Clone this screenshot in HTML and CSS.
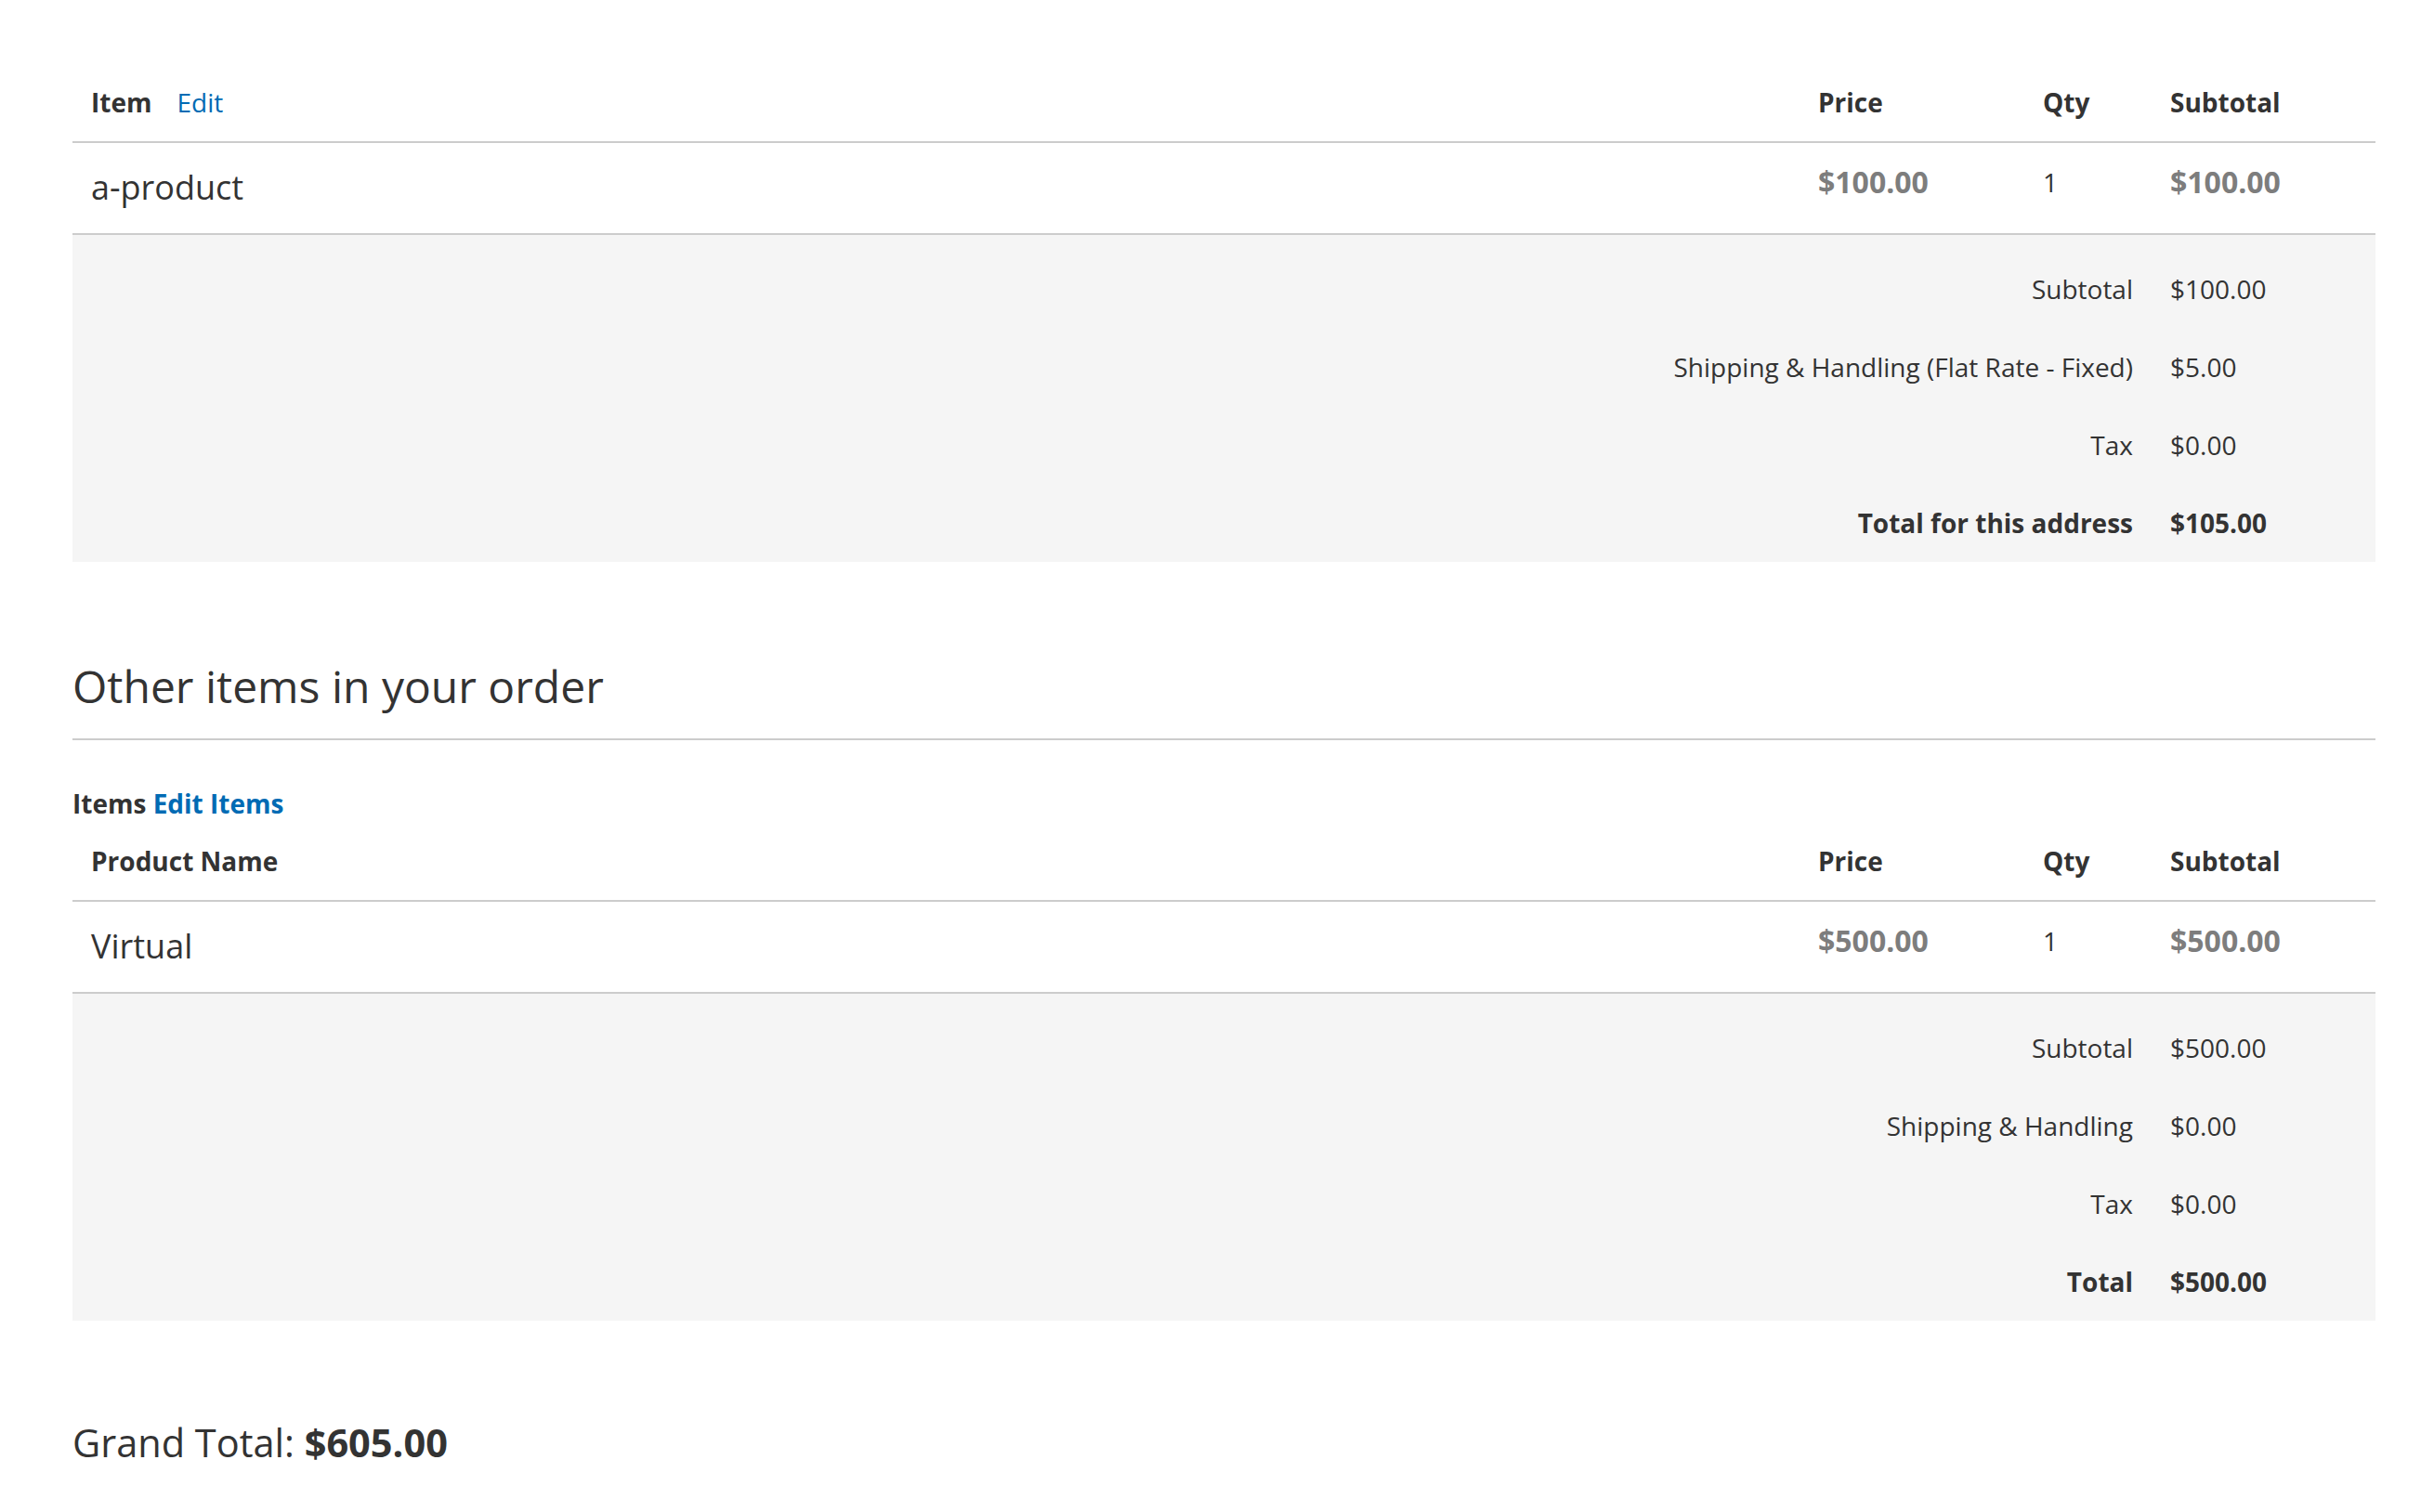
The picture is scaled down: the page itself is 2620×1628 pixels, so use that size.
FILE: index.html
```html
<!DOCTYPE html>
<html lang="en">
<head>
<meta charset="utf-8">
<title>Review Order</title>
<link rel="stylesheet" href="styles.css">
</head>
<body>
<main class="page">
  <table class="items">
    <colgroup>
      <col class="c-name"><col class="c-price"><col class="c-qty"><col class="c-sub">
    </colgroup>
    <thead>
      <tr>
        <th class="col-name"><span>Item</span><a href="#" class="edit">Edit</a></th>
        <th>Price</th>
        <th>Qty</th>
        <th>Subtotal</th>
      </tr>
    </thead>
    <tbody>
      <tr>
        <td class="col-name"><span class="product-name">a-product</span></td>
        <td><span class="price">$100.00</span></td>
        <td class="qty">1</td>
        <td><span class="price">$100.00</span></td>
      </tr>
    </tbody>
    <tfoot>
      <tr>
        <th colspan="3" class="mark">Subtotal</th>
        <td class="amount">$100.00</td>
      </tr>
      <tr>
        <th colspan="3" class="mark">Shipping &amp; Handling (Flat Rate - Fixed)</th>
        <td class="amount">$5.00</td>
      </tr>
      <tr>
        <th colspan="3" class="mark">Tax</th>
        <td class="amount">$0.00</td>
      </tr>
      <tr class="grand">
        <th colspan="3" class="mark"><strong>Total for this address</strong></th>
        <td class="amount"><strong>$105.00</strong></td>
      </tr>
    </tfoot>
  </table>

  <h2 class="block-title">Other items in your order</h2>

  <div class="caption"><strong>Items</strong> <a href="#" class="edit-items">Edit Items</a></div>
  <table class="items">
    <colgroup>
      <col class="c-name"><col class="c-price"><col class="c-qty"><col class="c-sub">
    </colgroup>
    <thead>
      <tr>
        <th class="col-name">Product Name</th>
        <th>Price</th>
        <th>Qty</th>
        <th>Subtotal</th>
      </tr>
    </thead>
    <tbody>
      <tr>
        <td class="col-name"><span class="product-name">Virtual</span></td>
        <td><span class="price">$500.00</span></td>
        <td class="qty">1</td>
        <td><span class="price">$500.00</span></td>
      </tr>
    </tbody>
    <tfoot>
      <tr>
        <th colspan="3" class="mark">Subtotal</th>
        <td class="amount">$500.00</td>
      </tr>
      <tr>
        <th colspan="3" class="mark">Shipping &amp; Handling</th>
        <td class="amount">$0.00</td>
      </tr>
      <tr>
        <th colspan="3" class="mark">Tax</th>
        <td class="amount">$0.00</td>
      </tr>
      <tr class="grand">
        <th colspan="3" class="mark"><strong>Total</strong></th>
        <td class="amount"><strong>$500.00</strong></td>
      </tr>
    </tfoot>
  </table>

  <div class="grand-total">Grand Total: <strong>$605.00</strong></div>
</main>
</body>
</html>
```

FILE: styles.css
```css
html, body {
  margin: 0;
  padding: 0;
  background: #ffffff;
}

body {
  font-family: "Open Sans", "Liberation Sans", sans-serif;
  color: #333333;
  font-size: 28px;
  line-height: 40px;
}

.page {
  padding: 68px 63px 40px 78px;
}

a {
  color: #006bb4;
  text-decoration: none;
}

.items {
  width: 100%;
  border-collapse: collapse;
  border-spacing: 0;
  table-layout: fixed;
}

.c-name { width: auto; }
.c-price { width: 242px; }
.c-qty { width: 137px; }
.c-sub { width: 241px; }

.items thead th {
  text-align: left;
  font-weight: 700;
  padding: 22px 20px;
  border-bottom: 2px solid #cccccc;
  vertical-align: bottom;
}

.items thead .edit {
  font-weight: 400;
  margin-left: 27px;
}

.items tbody td {
  padding: 22px 20px;
  vertical-align: top;
  border-bottom: 2px solid #cccccc;
}

.items tbody td.col-name {
  padding-top: 21px;
  padding-bottom: 23px;
}

.product-name {
  font-size: 36px;
  line-height: 53px;
  display: block;
}

.price {
  font-size: 32px;
  font-weight: 700;
  color: #7d7d7d;
}

.qty {
  font-size: 28px;
}

.items tfoot {
  background: #f5f5f5;
}

.items tfoot th,
.items tfoot td {
  padding: 22px 20px;
  font-weight: 400;
}

.items tfoot tr:first-child th,
.items tfoot tr:first-child td {
  padding-top: 38px;
}

.items tfoot .mark {
  text-align: right;
}

.items tfoot .amount {
  text-align: left;
}

.items tfoot strong {
  font-weight: 700;
}

.block-title {
  font-size: 48px;
  line-height: 53px;
  font-weight: 400;
  margin: 107px 0 48px 0;
  padding: 0 0 30px 0;
  border-bottom: 2px solid #cccccc;
}

.caption {
  font-weight: 700;
}

.caption strong {
  font-weight: 700;
}

.grand-total {
  margin-top: 101px;
  font-size: 41.5px;
  line-height: 60px;
}

.grand-total strong {
  font-weight: 700;
}
```
